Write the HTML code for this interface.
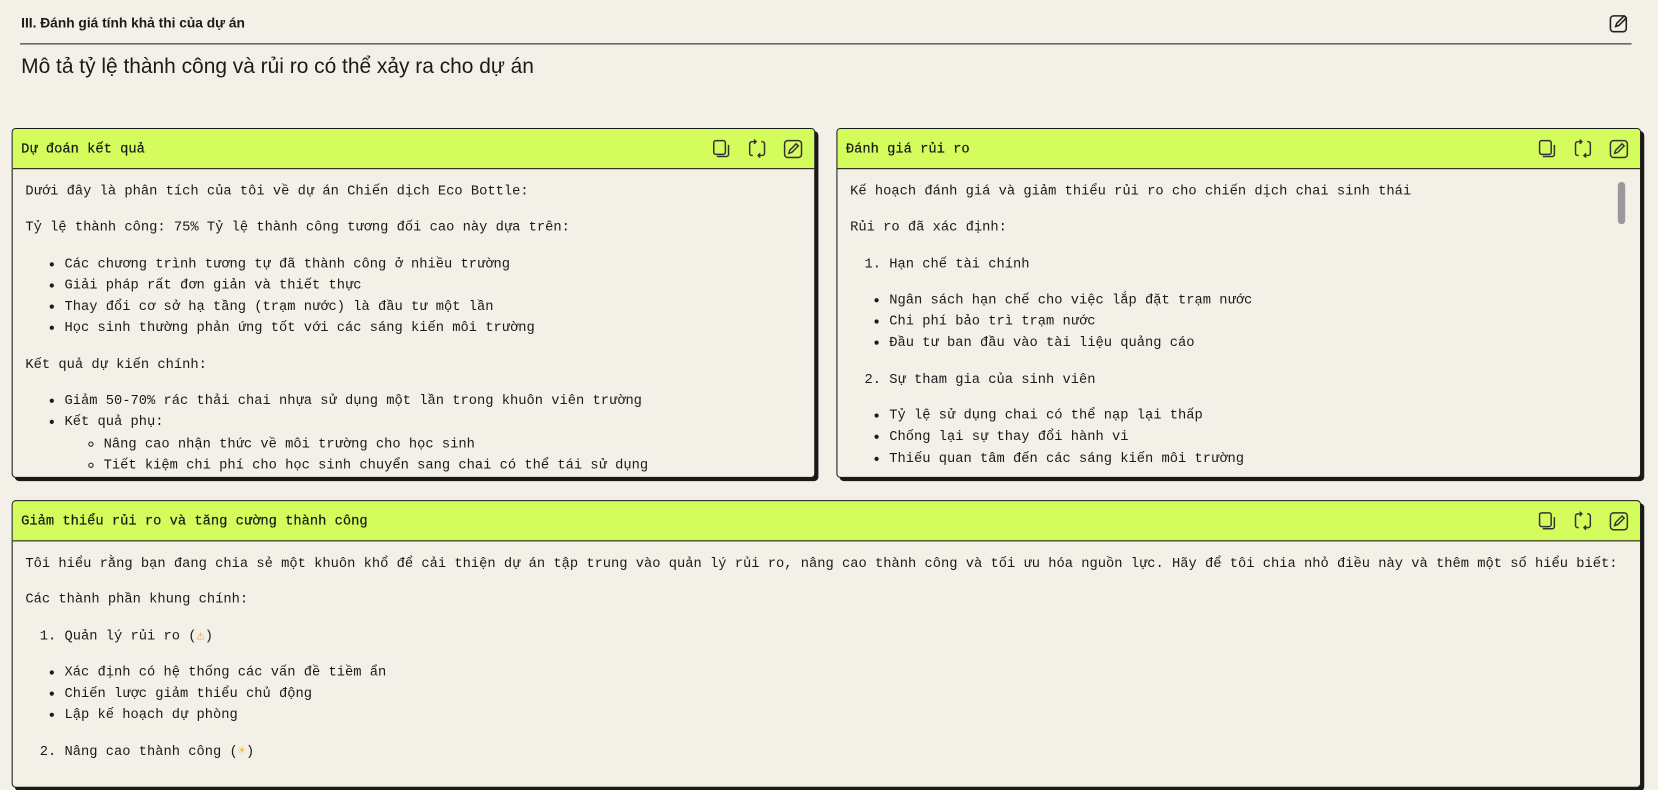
<!DOCTYPE html>
<html><head><meta charset="utf-8"><style>
*{box-sizing:border-box;margin:0;padding:0}
html,body{width:1658px;height:790px;overflow:hidden;background:#f3f1e7}
#w{width:1568px;height:747px;position:relative;transform:scale(1.0574);transform-origin:0 0;font-family:"Liberation Mono","DejaVu Sans Mono",monospace;color:#1a1a1a}
.t1{position:absolute;left:20px;top:14px;font:bold 13px "Liberation Sans","DejaVu Sans",sans-serif}
.hr{position:absolute;left:19px;top:41px;width:1524px;height:1px;background:#222}
.t2{position:absolute;left:20px;top:52px;font:19.8px "Liberation Sans","DejaVu Sans",sans-serif}
.ed{position:absolute;left:1521px;top:12px}
.p{position:absolute;border:1.5px solid #1a1a1a;border-radius:4px;box-shadow:3px 3px 0 #1a1a1a;background:#f3f1e7;overflow:hidden}
.h{height:38px;background:#d4fc5c;border-bottom:1.5px solid #1a1a1a;font-size:13px;padding:11px 8px 0;position:relative;-webkit-text-stroke:0.2px #1a1a1a}
.ic{position:absolute;right:10px;top:9px;display:flex;gap:14px}
.c{padding:11px 12px;font-size:13px;line-height:20.3px;overflow:hidden}
.c p{margin-bottom:14px}
.c ul,.c ol{padding-left:37px;margin-bottom:14px}
.c ul ul{list-style:circle;margin-bottom:0}
.sb{position:absolute;right:14px;top:50px;width:7px;height:40px;background:#999;border-radius:4px}
</style></head><body><div id="w">
<div class="t1">III. Đánh giá tính khả thi của dự án</div>
<svg class="ed" width="20" height="20" viewBox="0 0 20 20" fill="none" stroke="#222" stroke-width="1.5"><rect x="2" y="3" width="15" height="15" rx="3"/><path d="M7 13l1-3 7-7 2 2-7 7z"/></svg>
<div class="hr"></div>
<div class="t2">Mô tả tỷ lệ thành công và rủi ro có thể xảy ra cho dự án</div>

<svg width="0" height="0" style="position:absolute"><defs>
<g id="i1" fill="none" stroke="#333" stroke-width="1.4"><rect x="3" y="2" width="11" height="13" rx="2"/><path d="M6 17h9a2 2 0 0 0 2-2V6"/></g>
<g id="i2" fill="none" stroke="#333" stroke-width="1.4"><path d="M8 3H5a2 2 0 0 0-2 2v9a2 2 0 0 0 2 2h1M12 16h3a2 2 0 0 0 2-2V5a2 2 0 0 0-2-2h-1M7 1l2 2-2 2M13 14l-2 2 2 2"/></g>
<g id="i3" fill="none" stroke="#333" stroke-width="1.4"><rect x="2" y="2" width="16" height="16" rx="3"/><path d="M6 14l1-3 6-6 2 2-6 6z"/></g>
</defs></svg>

<div class="p" style="left:11px;top:121px;width:760px;height:331px">
<div class="h">Dự đoán kết quả<div class="ic"><svg width="20" height="20"><use href="#i1"/></svg><svg width="20" height="20"><use href="#i2"/></svg><svg width="20" height="20"><use href="#i3"/></svg></div></div>
<div class="c">
<p>Dưới đây là phân tích của tôi về dự án Chiến dịch Eco Bottle:</p>
<p>Tỷ lệ thành công: 75% Tỷ lệ thành công tương đối cao này dựa trên:</p>
<ul><li>Các chương trình tương tự đã thành công ở nhiều trường</li><li>Giải pháp rất đơn giản và thiết thực</li><li>Thay đổi cơ sở hạ tầng (trạm nước) là đầu tư một lần</li><li>Học sinh thường phản ứng tốt với các sáng kiến môi trường</li></ul>
<p>Kết quả dự kiến chính:</p>
<ul><li>Giảm 50-70% rác thải chai nhựa sử dụng một lần trong khuôn viên trường</li><li>Kết quả phụ:<ul><li>Nâng cao nhận thức về môi trường cho học sinh</li><li>Tiết kiệm chi phí cho học sinh chuyển sang chai có thể tái sử dụng</li></ul></li></ul>
</div></div>

<div class="p" style="left:791px;top:121px;width:761px;height:331px">
<div class="h">Đánh giá rủi ro<div class="ic"><svg width="20" height="20"><use href="#i1"/></svg><svg width="20" height="20"><use href="#i2"/></svg><svg width="20" height="20"><use href="#i3"/></svg></div></div>
<div class="sb"></div>
<div class="c">
<p>Kế hoạch đánh giá và giảm thiểu rủi ro cho chiến dịch chai sinh thái</p>
<p>Rủi ro đã xác định:</p>
<ol><li>Hạn chế tài chính</li></ol>
<ul><li>Ngân sách hạn chế cho việc lắp đặt trạm nước</li><li>Chi phí bảo trì trạm nước</li><li>Đầu tư ban đầu vào tài liệu quảng cáo</li></ul>
<ol start="2"><li>Sự tham gia của sinh viên</li></ol>
<ul><li>Tỷ lệ sử dụng chai có thể nạp lại thấp</li><li>Chống lại sự thay đổi hành vi</li><li>Thiếu quan tâm đến các sáng kiến môi trường</li></ul>
</div></div>

<div class="p" style="left:11px;top:473px;width:1541px;height:272px">
<div class="h">Giảm thiểu rủi ro và tăng cường thành công<div class="ic"><svg width="20" height="20"><use href="#i1"/></svg><svg width="20" height="20"><use href="#i2"/></svg><svg width="20" height="20"><use href="#i3"/></svg></div></div>
<div class="c">
<p>Tôi hiểu rằng bạn đang chia sẻ một khuôn khổ để cải thiện dự án tập trung vào quản lý rủi ro, nâng cao thành công và tối ưu hóa nguồn lực. Hãy để tôi chia nhỏ điều này và thêm một số hiểu biết:</p>
<p>Các thành phần khung chính:</p>
<ol><li>Quản lý rủi ro (<span style="color:#e8a020">⚠</span>)</li></ol>
<ul><li>Xác định có hệ thống các vấn đề tiềm ẩn</li><li>Chiến lược giảm thiểu chủ động</li><li>Lập kế hoạch dự phòng</li></ul>
<ol start="2"><li>Nâng cao thành công (<span style="color:#f0c030">☀</span>)</li></ol>
</div></div>
</div></body></html>
